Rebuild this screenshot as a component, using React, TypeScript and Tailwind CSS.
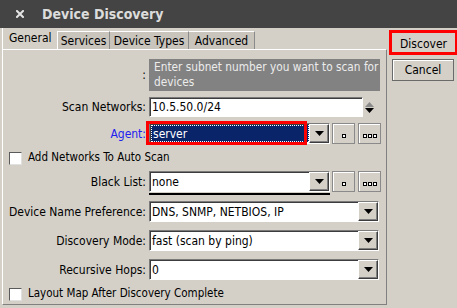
import React from "react";

const sunken =
  "border border-t-[#7a7a7a] border-l-[#7a7a7a] border-b-white border-r-white shadow-[inset_1px_1px_0_#3c3c3c]";
const raised =
  "border border-t-white border-l-white border-b-[#3c3c3c] border-r-[#3c3c3c] shadow-[inset_-1px_-1px_0_#808080]";

function Arrow() {
  return (
    <svg width="9" height="5" viewBox="0 0 9 5">
      <polygon points="0,0 9,0 4.5,5" fill="#000" />
    </svg>
  );
}

function DropBtn() {
  return (
    <div className={`w-[20px] h-full flex items-center justify-center bg-[#d4d0c8] ${raised}`}>
      <Arrow />
    </div>
  );
}

function SmallBtn({ dots }: { dots: number }) {
  return (
    <div className="w-[23px] h-[21px] border border-[#8a8a8a] shadow-[inset_1px_1px_0_#ffffff] flex items-end justify-center pb-[5px] gap-[1px]">
      {Array.from({ length: dots }).map((_, i) => (
        <div key={i} className="w-[4px] h-[4px] border border-black bg-white" />
      ))}
    </div>
  );
}

function Combo({
  text,
  w,
  selected,
  underline,
}: {
  text: string;
  w: string;
  selected?: boolean;
  underline?: boolean;
}) {
  return (
    <div className={`relative ${w} h-[21px]`}>
      <div className={`flex h-full bg-white ${sunken}`}>
        <div
          className={`flex-1 flex items-center pl-[2px] ${
            selected ? "bg-[#0a246a] text-white ml-[1px] my-[1px] outline-dotted outline-1 outline-[#ffffff] -outline-offset-1" : ""
          }`}
        >
          {text}
        </div>
        <DropBtn />
      </div>
      {underline && <div className="absolute left-0 right-0 bottom-[-3px] h-[2px] bg-black" />}
    </div>
  );
}

function Label({ children, blue }: { children: React.ReactNode; blue?: boolean }) {
  return (
    <div className={`w-[146px] shrink-0 text-right pr-[3px] ${blue ? "text-[#2222ee]" : ""}`}>{children}</div>
  );
}

function Check({ label }: { label: string }) {
  return (
    <div className="flex items-center pl-[6px]">
      <div className="w-[13px] h-[13px] bg-white border border-t-[#5a5a5a] border-l-[#5a5a5a] border-b-[#e0e0e0] border-r-[#e0e0e0]" />
      <span className="ml-[6px] text-[11.5px]">{label}</span>
    </div>
  );
}

export default function App() {
  return (
    <div className="w-[457px] h-[308px] bg-[#d4d0c8] flex flex-col overflow-hidden text-[12px] text-black font-['DejaVu_Sans_Condensed','DejaVu_Sans',sans-serif] leading-none">
      <div className="h-[28px] shrink-0 bg-[#444444] flex items-center text-[#dcdcdc] font-bold">
        <svg className="ml-[16px]" width="8" height="8" viewBox="0 0 8 8">
          <path d="M1 1 L7 7 M7 1 L1 7" stroke="#e4e4e4" strokeWidth="2" strokeLinecap="square" />
        </svg>
        <span className="ml-[18px] text-[14px]">Device Discovery</span>
      </div>
      <div className="flex flex-1">
        <div className="w-[387px] flex flex-col pl-[2px] pb-[3px]">
          <div className="h-[21px] flex items-end">
            <div className="h-[21px] w-[55px] border-l border-l-white pl-[6px] pt-[4px] bg-[#d4d0c8] relative z-10">
              General
            </div>
            <div className="h-[18px] w-[53px] bg-[#c9c5bd] border-l border-t border-l-white border-t-white border-r border-r-[#8a8a8a] flex items-center justify-center">
              Services
            </div>
            <div className="h-[18px] w-[79px] bg-[#c9c5bd] border-t border-t-white border-r border-r-[#8a8a8a] flex items-center justify-center">
              Device Types
            </div>
            <div className="h-[18px] w-[66px] bg-[#c9c5bd] border-t border-t-white border-r border-r-[#8a8a8a] flex items-center justify-center">
              Advanced
            </div>
          </div>
          <div className="flex-1 border-t border-t-white border-l border-l-white border-r border-r-[#808080] border-b border-b-[#808080] flex flex-col pt-[9px]">
            <div className="flex items-center h-[32px]">
              <Label>:</Label>
              <div className="w-[231px] h-[32px] bg-[#828282] text-[#ececec] text-[11.75px] leading-[15px] pl-[5px] pt-[1px] whitespace-nowrap">
                Enter subnet number you want to scan for
                <br />
                devices
              </div>
            </div>
            <div className="flex items-center h-[20px] mt-[6px]">
              <Label>Scan Networks:</Label>
              <div className={`w-[214px] h-[20px] bg-white ${sunken} flex items-center pl-[2px]`}>10.5.50.0/24</div>
              <div className="ml-[2px] flex flex-col gap-[1px]">
                <svg width="9" height="5" viewBox="0 0 9 5">
                  <polygon points="0,5 9,5 4.5,0" fill="#8a8a8a" />
                </svg>
                <svg width="9" height="5" viewBox="0 0 9 5">
                  <polygon points="0,0 9,0 4.5,5" fill="#000" />
                </svg>
              </div>
            </div>
            <div className="flex items-center h-[21px] mt-[6px]">
              <Label blue>Agent:</Label>
              <div className="relative">
                <Combo text="server" w="w-[181px]" selected />
                <div className="absolute left-[-3px] top-[-2px] w-[161px] h-[24px] border-[3px] border-[#ff0000]" />
              </div>
              <div className="ml-[2px]">
                <SmallBtn dots={1} />
              </div>
              <div className="ml-[3px]">
                <SmallBtn dots={3} />
              </div>
            </div>
            <div className="h-[16px] mt-[6px] flex items-center">
              <Check label="Add Networks To Auto Scan" />
            </div>
            <div className="flex items-center h-[21px] mt-[5px]">
              <Label>Black List:</Label>
              <Combo text="none" w="w-[181px]" underline />
              <div className="ml-[2px]">
                <SmallBtn dots={1} />
              </div>
              <div className="ml-[3px]">
                <SmallBtn dots={3} />
              </div>
            </div>
            <div className="flex items-center h-[21px] mt-[9px]">
              <Label>Device Name Preference:</Label>
              <Combo text="DNS, SNMP, NETBIOS, IP" w="w-[230px]" />
            </div>
            <div className="flex items-center h-[21px] mt-[8px]">
              <Label>Discovery Mode:</Label>
              <Combo text="fast (scan by ping)" w="w-[230px]" />
            </div>
            <div className="flex items-center h-[21px] mt-[8px]">
              <Label>Recursive Hops:</Label>
              <Combo text="0" w="w-[230px]" />
            </div>
            <div className="h-[16px] mt-[6px] flex items-center">
              <Check label="Layout Map After Discovery Complete" />
            </div>
          </div>
        </div>
        <div className="flex-1 flex flex-col pl-[5px] pt-[5px]">
          <div className="relative w-[63px] h-[19px]">
            <div className="w-full h-full flex items-center justify-center pt-[2px]">Discover</div>
            <div className="absolute left-[-3px] top-[-3px] right-[-3px] bottom-[-3px] border-[3px] border-[#ff0000]" />
          </div>
          <div className="mt-[7px] w-[62px] h-[22px] border border-[#6a6a6a] shadow-[inset_1px_1px_0_#ffffff] flex items-center justify-center">
            Cancel
          </div>
        </div>
      </div>
    </div>
  );
}
